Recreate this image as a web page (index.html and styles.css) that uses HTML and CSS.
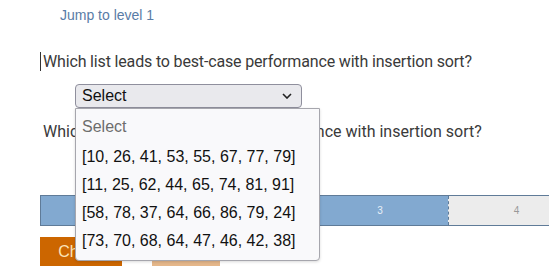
FILE: index.html
```
<!DOCTYPE html>
<html lang="en">
<head>
    <meta charset="UTF-8">
    <title>Insertion sort - level 3</title>
    <link rel="stylesheet" href="styles.css">
</head>
<body>
    <div class="page">
        <a href="#" class="jump">Jump to level 1</a>

        <div class="question first"><span class="caret"></span>Which list leads to best-case performance with insertion sort?</div>
        <div class="select-row">
            <div class="select-box">
                <span>Select</span>
                <svg width="10" height="6" viewBox="0 0 10 6"><path d="M1 1l4 4 4-4" fill="none" stroke="#222" stroke-width="1.6"/></svg>
            </div>
        </div>

        <div class="question second">Which list leads to best-case performance with insertion sort?</div>

        <div class="progress">
            <div class="seg done">1</div>
            <div class="seg done">2</div>
            <div class="seg done">3</div>
            <div class="seg todo">4</div>
        </div>

        <div class="buttons">
            <button class="btn check">Check</button>
            <button class="btn next">Next</button>
        </div>

        <!-- open list of the select -->
        <div class="dropdown">
            <div class="opt placeholder">Select</div>
            <div class="opt">[10, 26, 41, 53, 55, 67, 77, 79]</div>
            <div class="opt">[11, 25, 62, 44, 65, 74, 81, 91]</div>
            <div class="opt">[58, 78, 37, 64, 66, 86, 79, 24]</div>
            <div class="opt">[73, 70, 68, 64, 47, 46, 42, 38]</div>
        </div>
    </div>
</body>
</html>
```
FILE: styles.css
```
body {
    margin: 0;
    background: #fff;
    font-family: Roboto, "Liberation Sans", sans-serif;
    overflow: hidden;
}

.page {
    position: relative;
    height: 266px;
}

.jump {
    display: block;
    padding-left: 60px;
    height: 30px;
    line-height: 30px;
    font-family: "Liberation Sans", Arial, sans-serif;
    font-size: 14px;
    color: #5a7ca6;
    text-decoration: none;
}

.question {
    margin: 22px 0 0 40px;
    height: 18px;
    line-height: 18px;
    font-size: 16px;
    color: #3a3a3a;
    white-space: nowrap;
}

.question.first {
    letter-spacing: -0.16px;
}

.caret {
    display: inline-block;
    width: 1px;
    height: 19px;
    margin-right: 2px;
    background: #333;
    vertical-align: -4px;
}

.question.second {
    margin-top: 15px;
    padding-left: 3px;
}

.select-row {
    margin: 14px 0 0 75px;
}

.select-box {
    box-sizing: border-box;
    width: 227px;
    height: 24px;
    padding: 0 9px 0 6px;
    display: flex;
    align-items: center;
    justify-content: space-between;
    background: #e9e9ed;
    border: 1px solid #8f8f9d;
    border-radius: 4px;
    font-family: "Liberation Sans", Arial, sans-serif;
    font-size: 16px;
    color: #111;
}

/* barra de progreso */
.progress {
    display: flex;
    margin: 54px 0 0 40px;
    height: 31px;
    width: 509px;
    overflow: hidden;
    box-sizing: border-box;
    border-top: 1px solid #5f7b98;
    border-bottom: 1px solid #5f7b98;
}

.seg {
    flex: 0 0 136px;
    box-sizing: border-box;
    display: flex;
    align-items: center;
    justify-content: center;
    font-family: "Liberation Sans", Arial, sans-serif;
    font-size: 10px;
}

.seg.done {
    background: #82a9d0;
    color: #e8f0f8;
}

.seg.done:first-child {
    border-left: 1px solid #5f7b98;
}

.seg.todo {
    background: #ececec;
    color: #999;
    border-left: 1px dashed #5f7b98;
}

.buttons {
    display: flex;
    gap: 30px;
    margin: 11px 0 0 40px;
}

.btn {
    height: 30px;
    border: none;
    font-family: "Liberation Sans", Arial, sans-serif;
    font-size: 16px;
    padding: 0;
}

.check {
    width: 82px;
    background: #cc6600;
    color: #fbe3b8;
}

.next {
    width: 68px;
    background: #e5b78a;
    color: #fff;
}

/* lista desplegada del select */
.dropdown {
    position: absolute;
    left: 75px;
    top: 108px;
    width: 245px;
    height: 153px;
    box-sizing: border-box;
    padding: 5px 0 0 6px;
    background: #f9f9fb;
    border: 1px solid #a6a6ad;
    border-radius: 0 0 4px 4px;
    box-shadow: 0 1px 3px rgba(0, 0, 0, 0.15);
    font-family: "Liberation Sans", Arial, sans-serif;
    font-size: 16px;
    color: #111;
}

.opt {
    height: 28px;
    line-height: 28px;
    white-space: nowrap;
}

.opt.placeholder {
    height: 26px;
    line-height: 26px;
    margin-bottom: 3px;
    color: #6d6d6d;
}
```
